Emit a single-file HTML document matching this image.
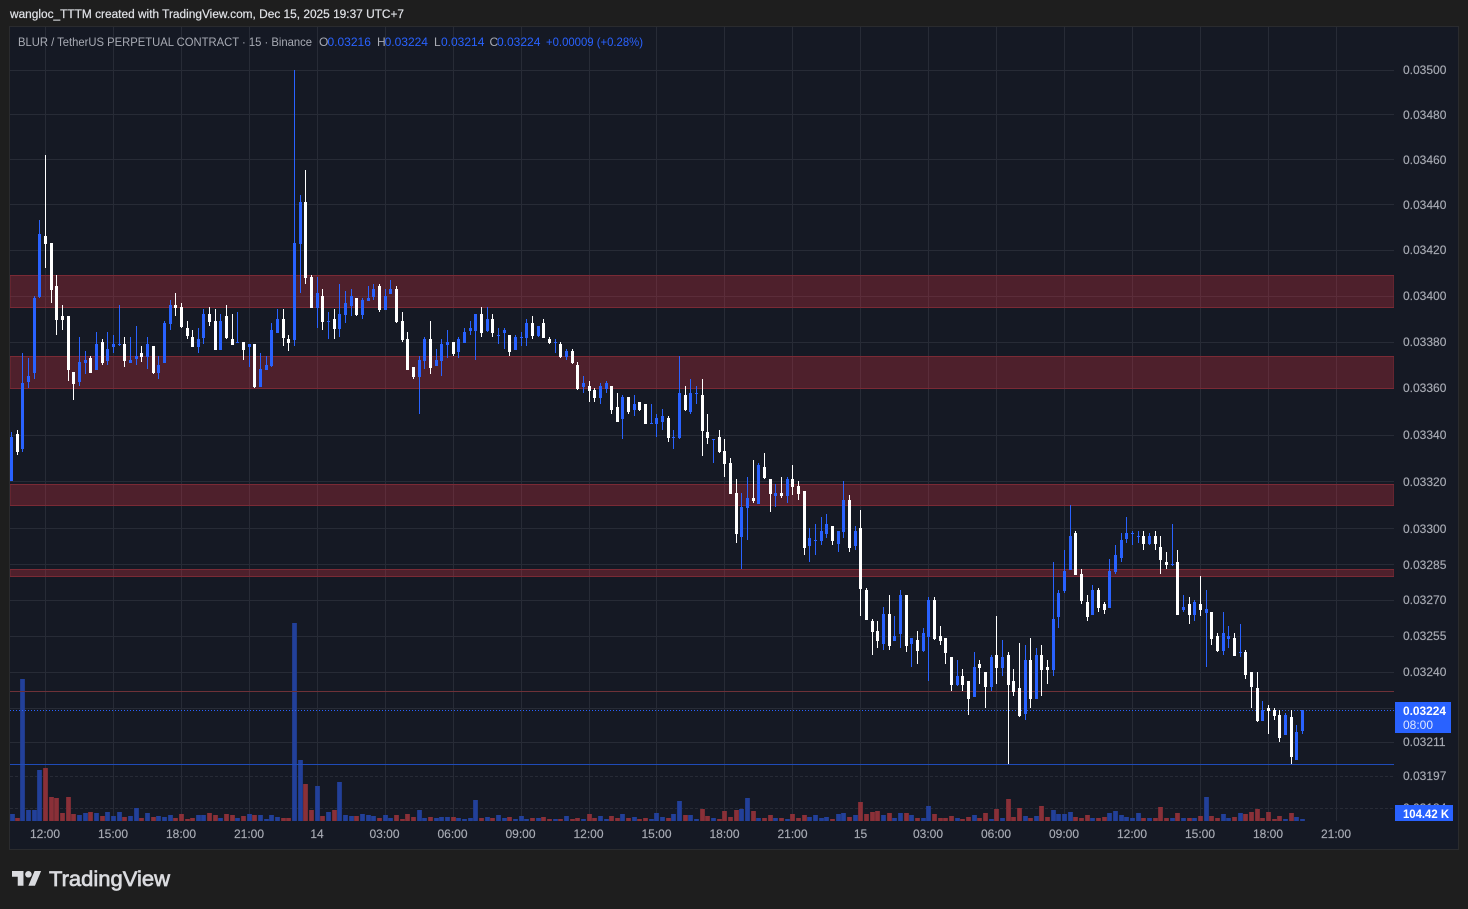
<!DOCTYPE html>
<html><head><meta charset="utf-8"><title>BLUR / TetherUS PERPETUAL CONTRACT</title>
<style>
html,body{margin:0;padding:0;background:#1e1e1e;width:1468px;height:909px;overflow:hidden}
svg{display:block}
text{font-family:"Liberation Sans",sans-serif}
.p text{font-size:12px;fill:#a8abb4;stroke:#a8abb4;stroke-width:.15}
.t text{font-size:12px;fill:#a8abb4;stroke:#a8abb4;stroke-width:.15;text-anchor:middle}
.l{font-size:12px;fill:#a8abb4}
.b{font-size:12px;fill:#2962ff}
</style></head><body>
<svg width="1468" height="909" viewBox="0 0 1468 909" xmlns="http://www.w3.org/2000/svg">
<defs><clipPath id="c"><rect x="10" y="27" width="1384" height="794"/></clipPath></defs>
<rect width="1468" height="909" fill="#1e1e1e"/>
<text x="10" y="18" font-size="11.5" fill="#dfe1e6" stroke="#dfe1e6" stroke-width=".2" textLength="394" lengthAdjust="spacingAndGlyphs">wangloc_TTTM created with TradingView.com, Dec 15, 2025 19:37 UTC+7</text>
<rect x="9.5" y="26.5" width="1449" height="823" fill="#151924" stroke="#2a2b2e"/>

<g clip-path="url(#c)">
<path shape-rendering="crispEdges" stroke="#272b36" fill="none" d="M45.5 27V821M113.5 27V821M181.5 27V821M249.5 27V821M317.5 27V821M385.5 27V821M453.5 27V821M521.5 27V821M589.5 27V821M656.5 27V821M724.5 27V821M792.5 27V821M860.5 27V821M928.5 27V821M996.5 27V821M1064.5 27V821M1132.5 27V821M1200.5 27V821M1268.5 27V821M1336.5 27V821M10 70.5H1394M10 114.5H1394M10 159.5H1394M10 204.5H1394M10 250.5H1394M10 296.5H1394M10 342.5H1394M10 388.5H1394M10 435.5H1394M10 481.5H1394M10 528.5H1394M10 564.5H1394M10 600.5H1394M10 636.5H1394M10 672.5H1394M10 708.5H1394M10 742.5H1394"/>
<path shape-rendering="crispEdges" stroke="#272b36" stroke-dasharray="3 2" fill="none" d="M10 776.5H1394M10 808.5H1394"/>

<g fill="#f23645" fill-opacity=".26" stroke="#7a2a35" shape-rendering="crispEdges">
<rect x="10" y="275.5" width="1384" height="32"/>
<rect x="10" y="356.5" width="1384" height="32"/>
<rect x="10" y="484.5" width="1384" height="21"/>
<rect x="10" y="569.5" width="1384" height="7"/>
</g>

<path fill="none" stroke="#22409a" stroke-width="4.7" d="M12.5 821V814M22.5 821V679M28.5 821V810M34.5 821V810M39.5 821V770M79.5 821V815M85.5 821V813M96.5 821V813M107.5 821V812M113.5 821V816M119.5 821V812M130.5 821V816M136.5 821V808M147.5 821V813M158.5 821V816M164.5 821V817M170.5 821V815M198.5 821V815M203.5 821V815M220.5 821V818M237.5 821V818M249.5 821V814M260.5 821V815M266.5 821V819M271.5 821V815M277.5 821V817M294.5 821V623M300.5 821V760M317.5 821V786M328.5 821V812M339.5 821V782M345.5 821V815M351.5 821V816M362.5 821V814M368.5 821V815M373.5 821V816M385.5 821V815M390.5 821V818M419.5 821V810M424.5 821V818M436.5 821V818M441.5 821V817M447.5 821V817M458.5 821V818M464.5 821V819M470.5 821V818M475.5 821V800M487.5 821V817M498.5 821V815M504.5 821V818M515.5 821V819M521.5 821V816M526.5 821V819M538.5 821V818M555.5 821V819M566.5 821V816M583.5 821V819M600.5 821V816M606.5 821V819M622.5 821V814M634.5 821V817M651.5 821V819M656.5 821V813M662.5 821V817M673.5 821V814M679.5 821V801M690.5 821V815M696.5 821V819M713.5 821V818M741.5 821V809M747.5 821V798M758.5 821V818M775.5 821V818M787.5 821V819M809.5 821V817M815.5 821V815M821.5 821V818M826.5 821V817M838.5 821V814M843.5 821V813M855.5 821V815M883.5 821V815M894.5 821V818M900.5 821V813M911.5 821V815M923.5 821V818M928.5 821V806M957.5 821V818M974.5 821V815M991.5 821V819M1002.5 821V818M1025.5 821V816M1036.5 821V816M1053.5 821V810M1058.5 821V814M1064.5 821V814M1070.5 821V812M1092.5 821V818M1109.5 821V813M1115.5 821V811M1121.5 821V815M1126.5 821V817M1132.5 821V818M1138.5 821V813M1149.5 821V818M1172.5 821V818M1183.5 821V818M1194.5 821V818M1206.5 821V797M1223.5 821V814M1228.5 821V818M1240.5 821V813M1285.5 821V819M1296.5 821V817M1302.5 821V819"/>
<path fill="none" stroke="#8a3038" stroke-width="4.7" d="M17.5 821V818M45.5 821V768M51.5 821V797M56.5 821V798M62.5 821V813M68.5 821V797M73.5 821V814M90.5 821V812M102.5 821V816M124.5 821V817M141.5 821V818M153.5 821V817M175.5 821V818M181.5 821V814M187.5 821V819M192.5 821V818M209.5 821V813M215.5 821V815M226.5 821V814M232.5 821V815M243.5 821V816M254.5 821V815M283.5 821V818M288.5 821V818M305.5 821V784M311.5 821V810M322.5 821V816M334.5 821V810M356.5 821V816M379.5 821V818M396.5 821V815M402.5 821V819M407.5 821V814M413.5 821V817M430.5 821V817M453.5 821V817M481.5 821V818M492.5 821V818M509.5 821V817M532.5 821V818M543.5 821V817M549.5 821V819M560.5 821V819M572.5 821V819M577.5 821V818M589.5 821V814M594.5 821V818M611.5 821V816M617.5 821V818M628.5 821V818M639.5 821V819M645.5 821V818M668.5 821V818M685.5 821V815M702.5 821V809M707.5 821V816M719.5 821V819M724.5 821V811M730.5 821V817M736.5 821V810M753.5 821V811M764.5 821V818M770.5 821V815M781.5 821V818M792.5 821V814M798.5 821V818M804.5 821V815M832.5 821V819M849.5 821V817M860.5 821V802M866.5 821V814M872.5 821V812M877.5 821V811M889.5 821V813M906.5 821V813M917.5 821V818M934.5 821V814M940.5 821V818M945.5 821V818M951.5 821V816M962.5 821V819M968.5 821V817M979.5 821V818M985.5 821V813M996.5 821V809M1008.5 821V799M1013.5 821V817M1019.5 821V808M1030.5 821V818M1041.5 821V806M1047.5 821V817M1075.5 821V817M1081.5 821V818M1087.5 821V815M1098.5 821V818M1104.5 821V817M1143.5 821V818M1155.5 821V818M1160.5 821V807M1166.5 821V818M1177.5 821V813M1189.5 821V818M1200.5 821V816M1211.5 821V816M1217.5 821V818M1234.5 821V817M1245.5 821V814M1251.5 821V812M1257.5 821V809M1262.5 821V818M1268.5 821V812M1274.5 821V819M1279.5 821V816M1291.5 821V813"/>

<path shape-rendering="crispEdges" stroke="#6e3138" fill="none" d="M10 691.5H1394"/>
<path shape-rendering="crispEdges" stroke="#2962ff" stroke-dasharray="1 2" fill="none" d="M10 710.5H1394"/>
<path shape-rendering="crispEdges" stroke="#1f4bb8" fill="none" d="M10 764.5H1394"/>

<path shape-rendering="crispEdges" fill="none" stroke="#2962ff" d="M11.5 432V481M22.5 353V452M28.5 358V388M34.5 296V379M39.5 220V298M79.5 337V386M85.5 351V374M96.5 332V370M107.5 332V365M113.5 335V353M119.5 305V346M130.5 337V363M136.5 326V365M147.5 337V369M158.5 356V379M164.5 321V363M170.5 300V330M198.5 328V353M203.5 309V344M220.5 314V350M237.5 312V343M249.5 344V367M260.5 353V387M266.5 356V370M271.5 323V367M277.5 309V333M294.5 70V346M300.5 195V293M317.5 277V328M328.5 312V339M339.5 284V337M345.5 291V323M351.5 289V316M362.5 298V319M368.5 286V301M373.5 284V300M385.5 289V310M390.5 280V294M419.5 356V414M424.5 337V369M436.5 349V366M441.5 339V376M447.5 330V358M458.5 337V358M464.5 328V343M470.5 321V335M475.5 314V360M487.5 307V332M498.5 328V344M504.5 328V349M515.5 335V350M521.5 332V346M526.5 319V346M538.5 326V337M555.5 339V353M566.5 349V360M583.5 376V393M600.5 383V404M606.5 381V393M622.5 395V439M634.5 395V416M651.5 404V424M656.5 414V437M662.5 409V430M673.5 430V449M679.5 356V439M690.5 379V414M696.5 386V404M713.5 439V463M741.5 493V569M747.5 477V540M758.5 463V504M775.5 484V507M787.5 477V503M809.5 528V562M815.5 524V555M821.5 517V545M826.5 514V538M838.5 531V552M843.5 481V538M855.5 526V550M883.5 607V650M894.5 616V641M900.5 590V648M911.5 638V667M923.5 628V652M928.5 597V681M957.5 660V686M974.5 652V697M991.5 655V691M1002.5 640V676M1025.5 645V720M1036.5 648V699M1053.5 562V676M1058.5 590V628M1064.5 550V593M1070.5 505V570M1092.5 585V615M1109.5 559V608M1115.5 545V574M1121.5 533V562M1126.5 517V543M1132.5 531V545M1138.5 531V543M1149.5 533V545M1172.5 524V566M1183.5 595V612M1194.5 600V621M1206.5 590V667M1223.5 612V655M1228.5 626V648M1240.5 624V657M1262.5 701V721M1285.5 713V735M1296.5 725V760M1302.5 710V734"/>
<path shape-rendering="crispEdges" fill="none" stroke="#2962ff" stroke-width="3" d="M11.5 437V481M22.5 383V449M28.5 376V382M34.5 298V373M39.5 234V297M79.5 362V382M85.5 360V363M96.5 344V370M107.5 349V361M113.5 344V347M119.5 344V345M130.5 360V363M136.5 356V359M147.5 344V357M158.5 365V373M164.5 323V363M170.5 305V324M198.5 339V347M203.5 314V338M220.5 321V350M237.5 342V343M249.5 344V347M260.5 369V387M266.5 365V370M271.5 330V366M277.5 319V333M294.5 243V340M300.5 202V244M317.5 293V308M328.5 321V322M339.5 314V329M345.5 303V315M351.5 296V306M362.5 300V315M368.5 298V301M373.5 289V297M385.5 296V310M390.5 289V294M419.5 360V377M424.5 339V361M436.5 360V366M441.5 344V361M447.5 342V345M458.5 339V352M464.5 332V343M470.5 328V331M475.5 314V331M487.5 319V331M498.5 335V336M504.5 330V333M515.5 337V350M521.5 337V338M526.5 323V338M538.5 326V336M555.5 342V343M566.5 351V357M583.5 383V387M600.5 386V398M606.5 383V389M622.5 397V419M634.5 404V410M651.5 423V424M656.5 418V424M662.5 416V422M673.5 437V438M679.5 393V438M690.5 393V412M696.5 393V394M713.5 439V440M741.5 507V537M747.5 498V508M758.5 465V504M775.5 493V496M787.5 479V496M809.5 538V546M815.5 540V541M821.5 531V541M826.5 524V534M838.5 531V544M843.5 500V532M855.5 531V546M883.5 614V644M894.5 636V641M900.5 595V634M911.5 638V644M923.5 633V651M928.5 600V637M957.5 676V685M974.5 667V697M991.5 657V687M1002.5 657V668M1025.5 660V714M1036.5 655V699M1053.5 619V670M1058.5 593V617M1064.5 571V591M1070.5 536V570M1092.5 590V615M1109.5 571V608M1115.5 555V572M1121.5 540V558M1126.5 533V539M1132.5 533V534M1138.5 536V537M1149.5 536V544M1172.5 564V565M1183.5 607V610M1194.5 602V615M1206.5 609V613M1223.5 633V651M1228.5 636V639M1240.5 652V653M1262.5 710V721M1285.5 715V735M1296.5 732V760M1302.5 710V731"/>
<path shape-rendering="crispEdges" fill="none" stroke="#ffffff" d="M17.5 430V455M45.5 155V268M51.5 243V303M56.5 275V335M62.5 305V330M68.5 316V381M73.5 372V400M90.5 356V373M102.5 339V365M124.5 337V367M141.5 346V362M153.5 346V374M175.5 293V316M181.5 303V328M187.5 321V339M192.5 330V347M209.5 307V326M215.5 309V350M226.5 305V339M232.5 314V345M243.5 342V360M254.5 344V388M283.5 309V346M288.5 335V351M305.5 170V284M311.5 275V308M322.5 289V330M334.5 309V339M356.5 298V316M379.5 284V312M396.5 286V323M402.5 312V342M407.5 332V370M413.5 367V379M430.5 321V374M453.5 342V356M481.5 307V337M492.5 314V337M509.5 335V356M532.5 316V339M543.5 319V338M549.5 337V344M560.5 342V358M572.5 349V364M577.5 362V390M589.5 381V402M594.5 388V402M611.5 386V414M617.5 393V422M628.5 397V414M639.5 402V411M645.5 404V424M668.5 416V442M685.5 386V411M702.5 379V456M707.5 414V444M719.5 430V453M724.5 439V477M730.5 458V494M736.5 479V543M753.5 460V503M764.5 453V479M770.5 479V512M781.5 477V498M792.5 465V495M798.5 481V500M804.5 491V555M832.5 526V545M849.5 495V552M860.5 510V616M866.5 588V620M872.5 619V655M877.5 621V648M889.5 595V650M906.5 595V652M917.5 631V664M934.5 597V640M940.5 626V645M945.5 638V664M951.5 657V691M962.5 669V691M968.5 681V715M979.5 660V684M985.5 672V708M996.5 616V684M1008.5 652V764M1013.5 669V696M1019.5 643V717M1030.5 638V708M1041.5 645V696M1047.5 660V684M1075.5 531V575M1081.5 569V604M1087.5 595V621M1098.5 588V612M1104.5 602V614M1143.5 531V550M1155.5 531V550M1160.5 536V574M1166.5 552V569M1177.5 550V615M1189.5 597V624M1200.5 576V616M1211.5 612V645M1217.5 633V652M1234.5 633V656M1245.5 650V679M1251.5 672V708M1257.5 672V722M1268.5 705V734M1274.5 708V720M1279.5 710V742M1291.5 710V764"/>
<path shape-rendering="crispEdges" fill="none" stroke="#ffffff" stroke-width="3" d="M17.5 434V452M45.5 236V244M51.5 243V290M56.5 286V320M62.5 316V320M68.5 316V370M73.5 372V384M90.5 358V373M102.5 342V363M124.5 344V361M141.5 353V357M153.5 346V373M175.5 305V308M181.5 307V327M187.5 328V336M192.5 337V347M209.5 314V322M215.5 321V350M226.5 316V338M232.5 339V345M243.5 342V350M254.5 344V387M283.5 319V338M288.5 339V343M305.5 202V278M311.5 277V308M322.5 296V322M334.5 319V329M356.5 298V315M379.5 286V310M396.5 289V322M402.5 321V340M407.5 339V370M413.5 367V377M430.5 339V368M453.5 342V354M481.5 314V333M492.5 319V333M509.5 335V352M532.5 323V336M543.5 323V338M549.5 339V343M560.5 344V357M572.5 351V363M577.5 365V389M589.5 386V391M594.5 390V398M611.5 386V410M617.5 407V422M628.5 397V412M639.5 402V410M645.5 404V424M668.5 418V438M685.5 395V410M702.5 395V431M707.5 432V438M719.5 437V452M724.5 451V464M730.5 463V494M736.5 493V534M753.5 498V501M764.5 467V478M770.5 479V494M781.5 493V496M792.5 479V487M798.5 486V494M804.5 491V548M832.5 526V541M849.5 500V548M860.5 528V589M866.5 590V620M872.5 621V632M877.5 631V641M889.5 614V646M906.5 595V646M917.5 640V651M934.5 600V639M940.5 636V641M945.5 638V653M951.5 657V685M962.5 676V685M968.5 681V699M979.5 664V668M985.5 672V687M996.5 655V668M1008.5 655V685M1013.5 681V692M1019.5 688V716M1030.5 660V699M1041.5 655V670M1047.5 667V670M1075.5 533V575M1081.5 574V601M1087.5 602V617M1098.5 590V608M1104.5 604V610M1143.5 536V544M1155.5 536V544M1160.5 547V560M1166.5 562V565M1177.5 562V615M1189.5 604V615M1200.5 604V610M1211.5 612V639M1217.5 636V651M1234.5 638V656M1245.5 652V675M1251.5 672V687M1257.5 688V721M1268.5 708V711M1274.5 710V716M1279.5 715V738M1291.5 717V757"/>
</g>

<text class="l" x="18" y="46" textLength="294" lengthAdjust="spacingAndGlyphs">BLUR / TetherUS PERPETUAL CONTRACT · 15 · Binance</text>
<text class="l" x="319" y="46">O</text><text class="b" x="327.5" y="46">0.03216</text>
<text class="l" x="377" y="46">H</text><text class="b" x="384.6" y="46">0.03224</text>
<text class="l" x="434" y="46">L</text><text class="b" x="441" y="46">0.03214</text>
<text class="l" x="489.5" y="46">C</text><text class="b" x="497" y="46">0.03224</text>
<text class="b" x="546" y="46" textLength="97" lengthAdjust="spacingAndGlyphs">+0.00009 (+0.28%)</text>

<g class="p">
<text x="1403" y="74">0.03500</text><text x="1403" y="119">0.03480</text><text x="1403" y="164">0.03460</text><text x="1403" y="209">0.03440</text><text x="1403" y="254">0.03420</text><text x="1403" y="300">0.03400</text><text x="1403" y="346">0.03380</text><text x="1403" y="392">0.03360</text><text x="1403" y="439">0.03340</text><text x="1403" y="486">0.03320</text><text x="1403" y="533">0.03300</text><text x="1403" y="569">0.03285</text><text x="1403" y="604">0.03270</text><text x="1403" y="640">0.03255</text><text x="1403" y="676">0.03240</text><text x="1403" y="746">0.03211</text><text x="1403" y="780">0.03197</text><text x="1403" y="812">0.03184</text>
</g>
<rect x="1395" y="702" width="56" height="31" fill="#2962ff"/>
<text x="1403" y="715" font-size="12" font-weight="700" fill="#fff" textLength="43" lengthAdjust="spacingAndGlyphs">0.03224</text>
<text x="1403" y="729" font-size="12" fill="#dde6ff">08:00</text>
<rect x="1395" y="805" width="58" height="16" fill="#2962ff"/>
<text x="1403" y="818" font-size="12" font-weight="700" fill="#fff" textLength="46" lengthAdjust="spacingAndGlyphs">104.42 K</text>

<g class="t">
<text x="45" y="838">12:00</text><text x="113" y="838">15:00</text><text x="181" y="838">18:00</text><text x="249" y="838">21:00</text><text x="317" y="838">14</text><text x="384.5" y="838">03:00</text><text x="452.5" y="838">06:00</text><text x="520.5" y="838">09:00</text><text x="588.5" y="838">12:00</text><text x="656.5" y="838">15:00</text><text x="724.5" y="838">18:00</text><text x="792.5" y="838">21:00</text><text x="860.5" y="838">15</text><text x="928" y="838">03:00</text><text x="996" y="838">06:00</text><text x="1064" y="838">09:00</text><text x="1132" y="838">12:00</text><text x="1200" y="838">15:00</text><text x="1268" y="838">18:00</text><text x="1336" y="838">21:00</text>
</g>

<g transform="translate(12 867.7) scale(.82)" fill="#dadbdf"><path d="M14 22H7V11H0V4h14v18zM28 22h-8l7.5-18h8L28 22z"/><circle cx="20" cy="8" r="4"/></g>
<text x="49" y="886" font-size="21" fill="#dadbdf" stroke="#dadbdf" stroke-width=".7" textLength="121" lengthAdjust="spacingAndGlyphs">TradingView</text>
</svg>
</body></html>
